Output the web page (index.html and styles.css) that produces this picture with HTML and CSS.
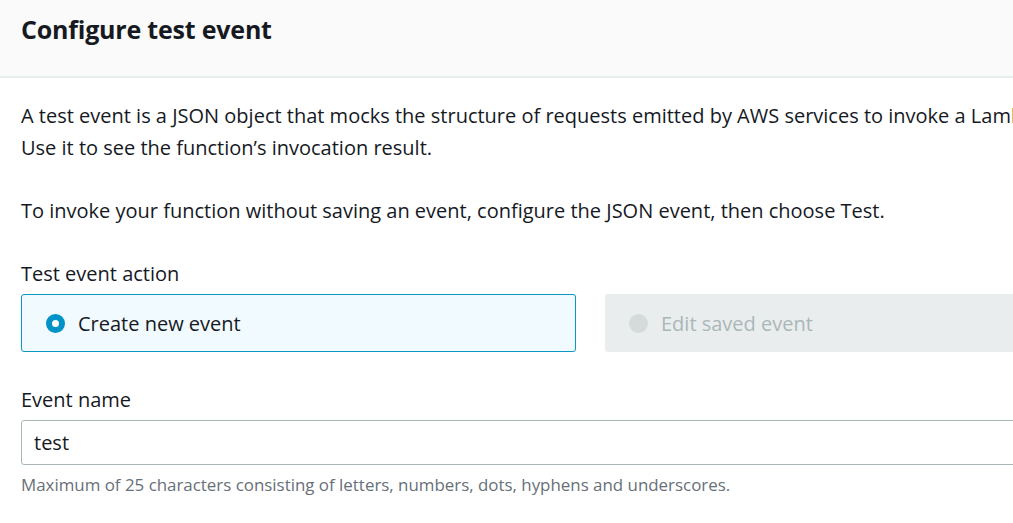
FILE: index.html
```html
<!DOCTYPE html>
<html lang="en">
<head>
  <meta charset="UTF-8" />
  <title>Configure test event</title>
  <link rel="stylesheet" href="styles.css">
</head>
<body>
  <div class="modal">
    <div class="modal-header">
      <h2>Configure test event</h2>
    </div>

    <div class="modal-body">
      <p class="intro">A test event is a JSON object that mocks the structure of requests emitted by AWS services to invoke a Lambda function.<br>Use it to see the function’s invocation result.</p>
      <p>To invoke your function without saving an event, configure the JSON event, then choose Test.</p>

      <div class="field">
        <label class="field-label">Test event action</label>
        <div class="tiles">
          <div class="tile selected">
            <span class="radio"></span>
            <span>Create new event</span>
          </div>
          <div class="tile disabled">
            <span class="radio"></span>
            <span>Edit saved event</span>
          </div>
        </div>
      </div>

      <div class="field">
        <label class="field-label">Event name</label>
        <div class="input">test</div>
        <div class="hint">Maximum of 25 characters consisting of letters, numbers, dots, hyphens and underscores.</div>
      </div>
    </div>
  </div>
</body>
</html>
```

FILE: styles.css
```css
* {
  box-sizing: border-box;
}

body {
  margin: 0;
  font-family: 'Open Sans', sans-serif;
  color: #16191f;
  background: #fff;
  overflow: hidden;
}

.modal {
  width: 1179px;
}

.modal-header {
  background: #fafafa;
  border-bottom: 2px solid #e7ecec;
  height: 78px;
  padding: 0 21px;
  display: flex;
  align-items: center;
}

.modal-header h2 {
  margin: 0 0 18px 0;
  font-size: 25px;
  font-weight: 700;
  letter-spacing: -0.2px;
}

.modal-body {
  padding: 22px 21px 0;
}

.modal-body p {
  margin: 0 0 31px 0;
  font-size: 20px;
  line-height: 32px;
}

.modal-body p.intro {
  white-space: nowrap;
}

.field {
  margin-bottom: 32px;
}

.field-label {
  display: block;
  font-size: 20px;
  line-height: 32px;
  margin-bottom: 4px;
}

.tiles {
  display: flex;
  gap: 29px;
}

.tile {
  flex: 1;
  height: 58px;
  display: flex;
  align-items: center;
  gap: 13px;
  padding: 0 24px;
  font-size: 20px;
  border-radius: 3px;
}

.tile.selected {
  background: #f1faff;
  border: 1px solid #0a97c4;
}

.tile.disabled {
  background: #eaeded;
  color: #aab7b8;
}

.radio {
  width: 19px;
  height: 19px;
  border-radius: 50%;
  flex-shrink: 0;
}

.tile.selected .radio {
  background: #fff;
  border: 6px solid #0093c7;
}

.tile.disabled .radio {
  background: #d5dbdb;
}

.input {
  height: 45px;
  border: 1px solid #aab7b8;
  border-radius: 3px;
  padding: 0 12px;
  display: flex;
  align-items: center;
  font-size: 20px;
}

.hint {
  margin-top: 8px;
  font-size: 16.9px;
  color: #687078;
}
```
